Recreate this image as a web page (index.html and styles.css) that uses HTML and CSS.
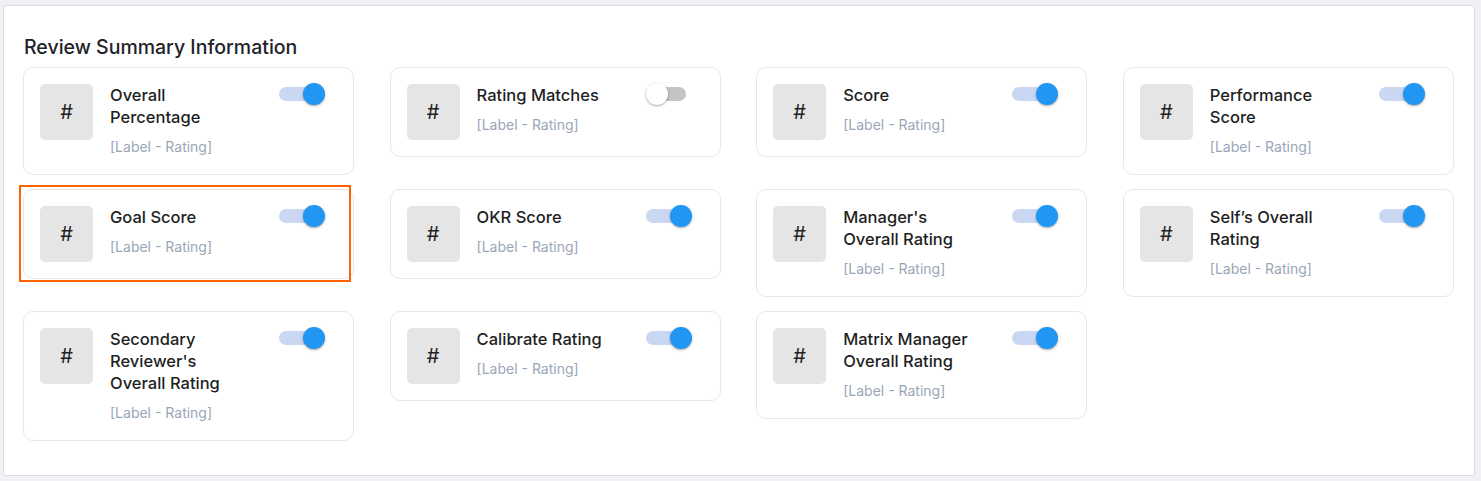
FILE: index.html
```html
<!DOCTYPE html>
<html lang="en">
<head>
<meta charset="utf-8">
<title>Review Summary Information</title>
<link rel="stylesheet" href="styles.css">
</head>
<body>
<section class="panel">
  <h2 class="panel-title">Review Summary Information</h2>
  <div class="grid">
    <div class="card">
      <div class="icon">#</div>
      <div class="info"><div class="name">Overall<br>Percentage</div><div class="label">[Label - Rating]</div></div>
      <span class="switch on"><span class="track"></span><span class="knob"></span></span>
    </div>
    <div class="card">
      <div class="icon">#</div>
      <div class="info"><div class="name">Rating Matches</div><div class="label">[Label - Rating]</div></div>
      <span class="switch"><span class="track"></span><span class="knob"></span></span>
    </div>
    <div class="card">
      <div class="icon">#</div>
      <div class="info"><div class="name">Score</div><div class="label">[Label - Rating]</div></div>
      <span class="switch on"><span class="track"></span><span class="knob"></span></span>
    </div>
    <div class="card">
      <div class="icon">#</div>
      <div class="info"><div class="name">Performance<br>Score</div><div class="label">[Label - Rating]</div></div>
      <span class="switch on"><span class="track"></span><span class="knob"></span></span>
    </div>
    <div class="card highlighted">
      <div class="icon">#</div>
      <div class="info"><div class="name">Goal Score</div><div class="label">[Label - Rating]</div></div>
      <span class="switch on"><span class="track"></span><span class="knob"></span></span>
    </div>
    <div class="card">
      <div class="icon">#</div>
      <div class="info"><div class="name">OKR Score</div><div class="label">[Label - Rating]</div></div>
      <span class="switch on"><span class="track"></span><span class="knob"></span></span>
    </div>
    <div class="card">
      <div class="icon">#</div>
      <div class="info"><div class="name">Manager's<br>Overall Rating</div><div class="label">[Label - Rating]</div></div>
      <span class="switch on"><span class="track"></span><span class="knob"></span></span>
    </div>
    <div class="card">
      <div class="icon">#</div>
      <div class="info"><div class="name">Self’s Overall<br>Rating</div><div class="label">[Label - Rating]</div></div>
      <span class="switch on"><span class="track"></span><span class="knob"></span></span>
    </div>
    <div class="card">
      <div class="icon">#</div>
      <div class="info"><div class="name">Secondary<br>Reviewer's<br>Overall Rating</div><div class="label">[Label - Rating]</div></div>
      <span class="switch on"><span class="track"></span><span class="knob"></span></span>
    </div>
    <div class="card">
      <div class="icon">#</div>
      <div class="info"><div class="name">Calibrate Rating</div><div class="label">[Label - Rating]</div></div>
      <span class="switch on"><span class="track"></span><span class="knob"></span></span>
    </div>
    <div class="card">
      <div class="icon">#</div>
      <div class="info"><div class="name">Matrix Manager<br>Overall Rating</div><div class="label">[Label - Rating]</div></div>
      <span class="switch on"><span class="track"></span><span class="knob"></span></span>
    </div>
  </div>
</section>
</body>
</html>
```
FILE: styles.css
```css
* { box-sizing: border-box; }
html, body { margin: 0; padding: 0; }
body {
  background: #f0f1f5;
  font-family: Inter, "Noto Sans", "Liberation Sans", sans-serif;
  color: #1e1f24;
  padding: 5px 6px 5px 3px;
  height: 481px;
}
.panel {
  background: #ffffff;
  border: 1px solid #dcdde0;
  border-radius: 3px;
  height: 471px;
  padding: 29px 19px 0 19px;
}
.panel-title {
  margin: 0 0 7px 1px;
  font-size: 19.5px;
  line-height: 25px;
  font-weight: 500;
  color: #222329;
}
.grid {
  display: grid;
  grid-template-columns: repeat(4, 331px);
  column-gap: 35.6px;
  row-gap: 14px;
  align-items: start;
}
.card {
  position: relative;
  display: flex;
  align-items: flex-start;
  border: 1px solid #e7e8ea;
  border-radius: 10px;
  padding: 16px;
  background: #fff;
}
.highlighted::after {
  content: "";
  position: absolute;
  left: -5px;
  top: -5px;
  right: 2px;
  bottom: -4px;
  border: 2px solid #ff6400;
  pointer-events: none;
}
.icon {
  flex: none;
  width: 53px;
  height: 56px;
  border-radius: 5px;
  background: #e5e5e5;
  display: flex;
  align-items: center;
  justify-content: center;
  font-size: 20px;
  color: #222;
  margin-right: 17px;
}
.info {
  flex: 1;
  min-width: 0;
}
.name {
  font-size: 16.5px;
  line-height: 22px;
  font-weight: 500;
  color: #1e1f24;
}
.label {
  margin-top: 8px;
  font-size: 14px;
  line-height: 22px;
  color: #9aa6b8;
}
.switch {
  flex: none;
  position: relative;
  width: 46px;
  height: 22px;
  margin-right: 12px;
  margin-top: -1px;
}
.track {
  position: absolute;
  left: 0;
  top: 4px;
  width: 40px;
  height: 14px;
  border-radius: 7px;
  background: #c4c4c4;
}
.knob {
  position: absolute;
  left: 0;
  top: 0;
  width: 22px;
  height: 22px;
  border-radius: 50%;
  background: #fff;
  box-shadow: 0 1px 3px rgba(0,0,0,0.25), 0 1px 1px rgba(0,0,0,0.12);
}
.switch.on .track { background: #c9d7f3; }
.switch.on .knob { left: 24px; background: #2196f3; }
```
